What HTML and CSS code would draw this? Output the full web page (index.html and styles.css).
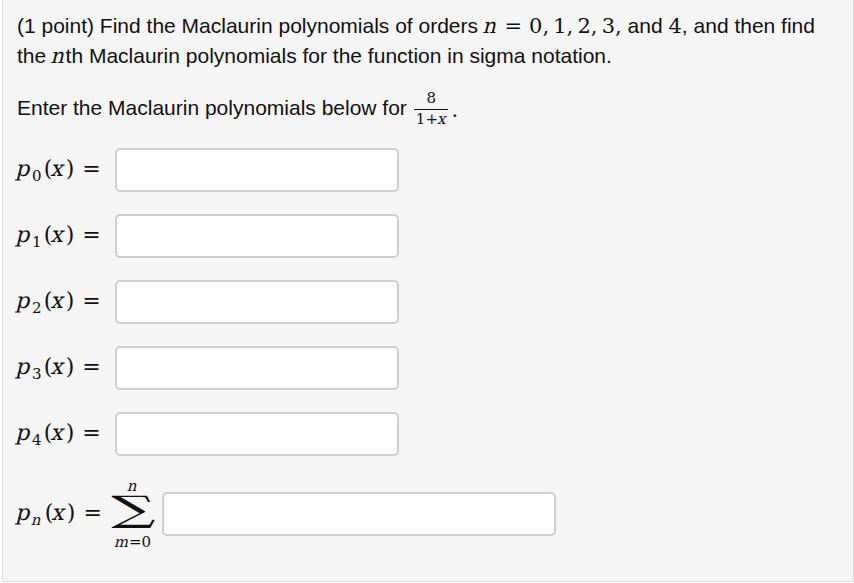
FILE: index.html
```html
<!DOCTYPE html>
<html>
<head>
<meta charset="utf-8">
<link rel="stylesheet" href="styles.css">
</head>
<body>
<div class="panel">
  <p class="intro">(1 point) Find the Maclaurin polynomials of orders <span class="m"><span class="it">n</span><span class="eq">=</span>0,&#8201;1,&#8201;2,&#8201;3,</span> and <span class="m">4</span>, and then find the <span class="m"><span class="it">n</span></span>th Maclaurin polynomials for the function in sigma notation.</p>
  <p class="enter">Enter the Maclaurin polynomials below for <span class="frac"><span class="num">8</span><span class="den">1+<span class="it">x</span></span></span><span class="dot">.</span></p>
  <div class="rows">
    <div class="row"><span class="lbl"><span class="it">p</span><sub>0</sub>(<span class="it">x</span>)<span class="eq">=</span></span><span class="box"></span></div>
    <div class="row"><span class="lbl"><span class="it">p</span><sub>1</sub>(<span class="it">x</span>)<span class="eq">=</span></span><span class="box"></span></div>
    <div class="row"><span class="lbl"><span class="it">p</span><sub>2</sub>(<span class="it">x</span>)<span class="eq">=</span></span><span class="box"></span></div>
    <div class="row"><span class="lbl"><span class="it">p</span><sub>3</sub>(<span class="it">x</span>)<span class="eq">=</span></span><span class="box"></span></div>
    <div class="row"><span class="lbl"><span class="it">p</span><sub>4</sub>(<span class="it">x</span>)<span class="eq">=</span></span><span class="box"></span></div>
    <div class="row sumrow"><span class="lbl short"><span class="it">p</span><sub><span class="it">n</span></sub>(<span class="it">x</span>)<span class="eq">=</span></span><span class="sum"><span class="lim"><span class="it">n</span></span><span class="sig"><span class="sig-g">∑</span></span><span class="lim"><span class="it">m</span>=0</span></span><span class="box wide"></span></div>
  </div>
</div>
</body>
</html>
```
FILE: styles.css
```css
html, body { margin: 0; padding: 0; background: #fff; }
.panel {
  margin-left: 2px;
  width: 852px;
  height: 582px;
  background: #f5f5f5;
  border: 1px solid #dcdcdc;
  border-top: none;
  padding: 11px 0 0 14px;
  box-sizing: border-box;
  font-family: "Liberation Sans", Arial, sans-serif;
  font-size: 21px;
  color: #111;
}
.it { display: inline-block; transform: skewX(-14deg); }
.intro { margin: 0; line-height: 30px; width: 820px; }
.m { font-family: "DejaVu Serif", serif; font-size: 21px; }
.m .eq { margin: 0 7px; }
.enter { margin: 17px 0 0 0; display: flex; align-items: center; }
.frac { display: inline-flex; flex-direction: column; align-items: center; font-family: "DejaVu Serif", serif; font-size: 15px; line-height: 17px; margin-left: 7px; margin-top: 2px; }
.num { border-bottom: 1px solid #111; padding: 0 3px 2px; width: 100%; text-align: center; box-sizing: border-box; }
.den { padding: 1px 2px 0; }
.dot { font-family: "DejaVu Serif", serif; margin-left: 3px; margin-top: 4px; }
.rows { display: flex; flex-direction: column; gap: 22px; margin-top: 20px; }
.row { display: flex; align-items: center; height: 44px; }
.lbl { font-family: "DejaVu Serif", serif; font-size: 22px; width: 98px; white-space: nowrap; }
.lbl .it { margin-right: 1px; }
.lbl sub { font-size: 15px; vertical-align: -5px; margin-right: 2px; }
.lbl .eq { margin-left: 8px; }
.lbl.short { width: 94px; }
.box {
  width: 284px; height: 44px; box-sizing: border-box;
  background: #fff; border: 2px solid #cfcfcf; border-radius: 5px;
}
.sumrow { margin-top: 14px; }
.sum { display: inline-flex; flex-direction: column; align-items: center; font-family: "DejaVu Serif", serif; width: 48px; margin-left: -2px; margin-right: 5px; }
.lim { font-size: 15px; line-height: 16px; height: 16px; }
.sig { display: block; height: 40px; overflow: visible; text-align: center; }
.sig-g { display: inline-block; font-family: "DejaVu Serif", serif; font-size: 40px; line-height: 40px; transform: translateY(-5px) scale(1.55, 0.88); }
.box.wide { width: 394px; }
```
